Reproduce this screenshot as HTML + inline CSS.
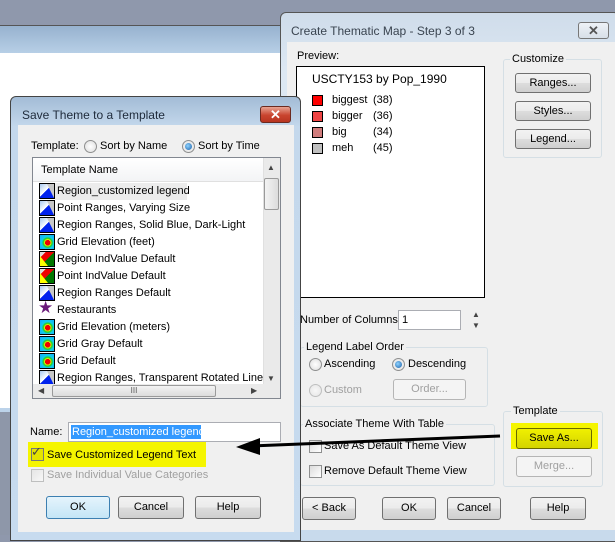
<!DOCTYPE html>
<html><head><style>
*{margin:0;padding:0;box-sizing:border-box}
body{width:615px;height:535px;overflow:hidden;position:relative;background:#8f98ac;font-family:"Liberation Sans",sans-serif;font-size:11px;color:#000}
.a{position:absolute}
.t{position:absolute;white-space:nowrap;font-size:11px;line-height:14px}
.btn{position:absolute;border:1px solid #707070;border-radius:3px;background:linear-gradient(#f2f2f2,#ebebeb 50%,#dddddd 51%,#cfcfcf);text-align:center;font-size:11px;line-height:19px}
.dis{color:#a0a0a0;border-color:#b5b5b5;background:#f4f4f4}
.grp{position:absolute;border:1px solid #d5dfe5;border-radius:3px}
.gl{position:absolute;background:#f0f0f0;padding:0 2px;font-size:11px;line-height:14px;white-space:nowrap}
.rad{position:absolute;width:13px;height:13px;border-radius:50%;border:1px solid #8e8f8f;background:radial-gradient(#fff,#dcdcdc)}
.rad.on::after{content:"";position:absolute;left:2px;top:2px;width:7px;height:7px;border-radius:50%;background:radial-gradient(circle at 40% 40%,#8fd3ff,#1a5fa8)}
.chk{position:absolute;width:13px;height:13px;border:1px solid #8e8f8f;background:linear-gradient(135deg,#dcdcdc,#fff)}
.ic{position:absolute;left:6px;width:16px;height:16px;border:1px solid #000}
.reg{background:linear-gradient(135deg,#a8c8f0 0,#fff 45%,#0022ee 46%,#0022ee 100%)}
.reg::after{content:"";position:absolute;right:0;top:0;width:0;height:0;border-right:7px solid #c8c8c8;border-bottom:14px solid transparent}
.grid{background:radial-gradient(circle at 55% 55%,#e00 0,#e00 25%,#ff0 26%,#2c2 40%,#1ce 55%,#1af 100%)}
.ind{background:linear-gradient(135deg,#ddd 0,#ddd 20%,#e00 21%,#e00 50%,#070 51%);}
.ind::after{content:"";position:absolute;left:0;bottom:0;border-left:8px solid #ff0;border-top:10px solid transparent}
.row{position:absolute;left:0;height:17px;width:232px}
.row span{position:absolute;left:24px;top:2px;font-size:11px;white-space:nowrap}
</style></head><body>
<div class="a" style="left:0;top:25px;width:282px;height:28px;background:linear-gradient(#97b2cf,#b7cfe6);border-top:1px solid #555"></div>
<div class="a" style="left:0;top:53px;width:282px;height:355px;background:#fff"></div>
<div class="a" style="left:0;top:408px;width:12px;height:4px;background:#bcd3ea"></div>
<div class="a" style="left:0;top:412px;width:12px;height:123px;background:#8e97a9"></div>

<div class="a" style="left:280px;top:12px;width:340px;height:530px;background:linear-gradient(#cfdcea,#dde8f3 60px,#c8daec);border:1px solid #555;border-radius:6px 6px 0 0"></div>
<div class="t" style="left:291px;top:24px;font-size:12px;color:#3a4450">Create Thematic Map - Step 3 of 3</div>
<div class="a" style="left:578px;top:22px;width:31px;height:17px;border:1px solid #777;border-radius:3px;background:linear-gradient(#eef2f7,#d8dfe8);text-align:center;font-size:13px;line-height:15px;color:#555;font-weight:bold">✕</div>
<div class="a" style="left:287px;top:42px;width:328px;height:488px;background:#f0f0f0"></div>
<div class="t" style="left:297px;top:49px">Preview:</div>
<div class="a" style="left:296px;top:66px;width:189px;height:232px;background:#fff;border:1px solid #000"></div>
<div class="t" style="left:312px;top:72px;font-size:12px">USCTY153 by Pop_1990</div>
<div class="a" style="left:312px;top:95px;width:11px;height:11px;background:#f00;border:1px solid #000"></div>
<div class="a" style="left:312px;top:111px;width:11px;height:11px;background:#e44;border:1px solid #000"></div>
<div class="a" style="left:312px;top:127px;width:11px;height:11px;background:#d07c7c;border:1px solid #000"></div>
<div class="a" style="left:312px;top:143px;width:11px;height:11px;background:#c0c0c0;border:1px solid #000"></div>
<div class="t" style="left:332px;top:93px">biggest</div><div class="t" style="left:373px;top:93px">(38)</div>
<div class="t" style="left:332px;top:109px">bigger</div><div class="t" style="left:373px;top:109px">(36)</div>
<div class="t" style="left:332px;top:125px">big</div><div class="t" style="left:373px;top:125px">(34)</div>
<div class="t" style="left:332px;top:141px">meh</div><div class="t" style="left:373px;top:141px">(45)</div>

<div class="grp" style="left:503px;top:59px;width:99px;height:99px"></div>
<div class="gl" style="left:510px;top:52px">Customize</div>
<div class="btn" style="left:515px;top:73px;width:76px;height:20px">Ranges...</div>
<div class="btn" style="left:515px;top:101px;width:76px;height:20px">Styles...</div>
<div class="btn" style="left:515px;top:129px;width:76px;height:20px">Legend...</div>

<div class="t" style="left:300px;top:313px">Number of Columns:</div>
<div class="a" style="left:398px;top:310px;width:63px;height:20px;background:#fff;border:1px solid #abadb3"></div>
<div class="t" style="left:402px;top:313px">1</div>
<div class="t" style="left:472px;top:308px;font-size:8px;color:#444">▲</div>
<div class="t" style="left:472px;top:319px;font-size:8px;color:#444">▼</div>

<div class="grp" style="left:300px;top:347px;width:188px;height:60px"></div>
<div class="gl" style="left:304px;top:340px">Legend Label Order</div>
<div class="rad" style="left:309px;top:358px"></div><div class="t" style="left:324px;top:357px">Ascending</div>
<div class="rad on" style="left:392px;top:358px"></div><div class="t" style="left:408px;top:357px">Descending</div>
<div class="rad" style="left:309px;top:384px;opacity:.5"></div><div class="t" style="left:324px;top:383px;color:#a0a0a0">Custom</div>
<div class="btn dis" style="left:393px;top:379px;width:73px;height:21px">Order...</div>

<div class="grp" style="left:300px;top:424px;width:195px;height:62px"></div>
<div class="gl" style="left:303px;top:417px">Associate Theme With Table</div>
<div class="chk" style="left:309px;top:440px"></div><div class="t" style="left:324px;top:439px">Save As Default Theme View</div>
<div class="chk" style="left:309px;top:465px"></div><div class="t" style="left:324px;top:464px">Remove Default Theme View</div>

<div class="grp" style="left:503px;top:411px;width:100px;height:76px"></div>
<div class="gl" style="left:511px;top:404px">Template</div>
<div class="a" style="left:511px;top:423px;width:87px;height:26px;background:#f5f500"></div>
<div class="btn" style="left:516px;top:428px;width:76px;height:21px;background:linear-gradient(#f0f000,#d4d400);border-color:#6a6a00">Save As...</div>
<div class="btn dis" style="left:516px;top:456px;width:76px;height:21px">Merge...</div>

<div class="btn" style="left:302px;top:497px;width:54px;height:23px;line-height:21px">&lt; Back</div>
<div class="btn" style="left:382px;top:497px;width:54px;height:23px;line-height:21px">OK</div>
<div class="btn" style="left:447px;top:497px;width:54px;height:23px;line-height:21px">Cancel</div>
<div class="btn" style="left:530px;top:497px;width:56px;height:23px;line-height:21px">Help</div>

<div class="a" style="left:10px;top:96px;width:291px;height:445px;background:linear-gradient(#a3bcd6,#c4d8ec 30px,#c7dbef);border:1px solid #444;border-radius:6px 6px 0 0"></div>
<div class="t" style="left:22px;top:108px;font-size:12px;color:#1e2a3a">Save Theme to a Template</div>
<div class="a" style="left:260px;top:106px;width:31px;height:17px;border:1px solid #6b2a20;border-radius:3px;background:linear-gradient(#e8a493,#c9442f 55%,#b83520);text-align:center;color:#fff;font-weight:bold;font-size:13px;line-height:15px">✕</div>
<div class="a" style="left:18px;top:125px;width:276px;height:407px;background:#f0f0f0"></div>
<div class="t" style="left:31px;top:139px">Template:</div>
<div class="rad" style="left:84px;top:140px"></div><div class="t" style="left:100px;top:139px">Sort by Name</div>
<div class="rad on" style="left:182px;top:140px"></div><div class="t" style="left:198px;top:139px">Sort by Time</div>

<div class="a" style="left:32px;top:157px;width:249px;height:242px;background:#fff;border:1px solid #828790;overflow:hidden">
 <div class="a" style="left:0;top:0;width:230px;height:24px;background:linear-gradient(#fff,#f3f4f6);border-bottom:1px solid #e0e0e0"></div>
 <div class="t" style="left:8px;top:5px">Template Name</div>
 <div class="a" style="left:0;top:25px;width:230px;height:205px;overflow:hidden">
  <div class="row" style="top:0"><div class="a" style="left:22px;top:0;width:132px;height:17px;background:#ececec"></div><div class="ic reg"></div><span>Region_customized legend</span></div>
  <div class="row" style="top:17px"><div class="ic reg"></div><span>Point Ranges, Varying Size</span></div>
  <div class="row" style="top:34px"><div class="ic reg"></div><span>Region Ranges, Solid Blue, Dark-Light</span></div>
  <div class="row" style="top:51px"><div class="ic grid"></div><span>Grid Elevation (feet)</span></div>
  <div class="row" style="top:68px"><div class="ic ind"></div><span>Region IndValue Default</span></div>
  <div class="row" style="top:85px"><div class="ic ind"></div><span>Point IndValue Default</span></div>
  <div class="row" style="top:102px"><div class="ic reg"></div><span>Region Ranges Default</span></div>
  <div class="row" style="top:119px"><div class="t" style="left:5px;top:-1px;font-size:17px;color:#6a1a7a">★</div><span>Restaurants</span></div>
  <div class="row" style="top:136px"><div class="ic grid"></div><span>Grid Elevation (meters)</span></div>
  <div class="row" style="top:153px"><div class="ic grid"></div><span>Grid Gray Default</span></div>
  <div class="row" style="top:170px"><div class="ic grid"></div><span>Grid Default</span></div>
  <div class="row" style="top:187px"><div class="ic reg"></div><span>Region Ranges, Transparent Rotated Lines</span></div>
  <div class="row" style="top:204px"><div class="ic grid"></div><span>Grid TIN Default</span></div>
 </div>
 <div class="a" style="left:230px;top:0;width:17px;height:226px;background:#eaeaea;border-left:1px solid #e0e0e0"></div>
 <div class="t" style="left:234px;top:3px;font-size:8px;color:#444">▲</div>
 <div class="a" style="left:231px;top:20px;width:15px;height:32px;background:linear-gradient(90deg,#f3f3f3,#dcdcdc);border:1px solid #9a9a9a;border-radius:2px"></div>
 <div class="t" style="left:234px;top:214px;font-size:8px;color:#444">▼</div>
 <div class="a" style="left:0;top:226px;width:247px;height:14px;background:#eaeaea"></div>
 <div class="t" style="left:5px;top:226px;font-size:8px;color:#444">◀</div>
 <div class="a" style="left:19px;top:227px;width:164px;height:12px;background:linear-gradient(#f3f3f3,#dcdcdc);border:1px solid #9a9a9a;border-radius:2px;text-align:center;font-size:8px;line-height:10px;color:#555">III</div>
 <div class="t" style="left:218px;top:226px;font-size:8px;color:#444">▶</div>
</div>

<div class="t" style="left:30px;top:425px">Name:</div>
<div class="a" style="left:68px;top:422px;width:213px;height:20px;background:#fff;border:1px solid #abadb3"></div>
<div class="a" style="left:71px;top:425px;width:130px;height:14px;background:#3399ff"></div>
<div class="t" style="left:72px;top:425px;color:#fff">Region_customized legend</div>

<div class="a" style="left:28px;top:442px;width:178px;height:25px;background:#f5f500"></div>
<div class="chk" style="left:31px;top:448px;background:#e4e400;border-color:#777"></div>
<div class="t" style="left:31px;top:445px;font-size:13px;color:#444">✓</div>
<div class="t" style="left:47px;top:448px">Save Customized Legend Text</div>
<div class="chk" style="left:31px;top:469px;opacity:.5"></div>
<div class="t" style="left:47px;top:468px;color:#a0a0a0">Save Individual Value Categories</div>

<div class="btn" style="left:46px;top:496px;width:64px;height:23px;line-height:21px;border-color:#3c7fb1;background:linear-gradient(#e5f4fc,#c4e5f6)">OK</div>
<div class="btn" style="left:118px;top:496px;width:66px;height:23px;line-height:21px">Cancel</div>
<div class="btn" style="left:195px;top:496px;width:66px;height:23px;line-height:21px">Help</div>

<svg class="a" style="left:0;top:0" width="615" height="535">
 <line x1="500" y1="436" x2="250" y2="446" stroke="#000" stroke-width="3"/>
 <polygon points="236,447 260,438 260,455" fill="#000"/>
</svg>
</body></html>
